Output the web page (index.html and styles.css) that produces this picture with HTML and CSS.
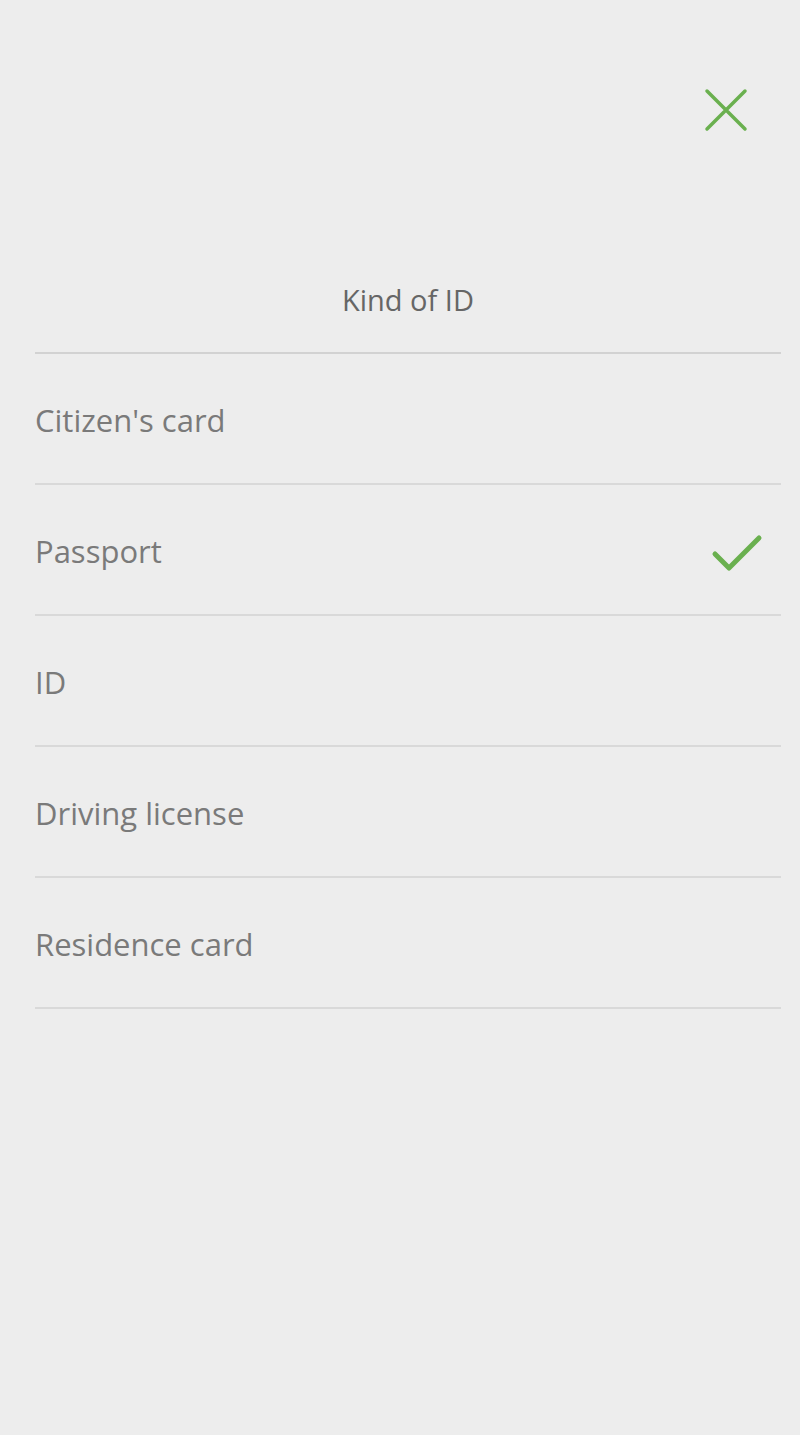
FILE: index.html
```html
<!DOCTYPE html>
<html>
<head>
<meta charset="utf-8">
<link rel="stylesheet" href="styles.css">
</head>
<body>
<div class="screen">
  <div class="topbar">
    <button class="close" aria-label="Close">
      <svg width="44" height="44" viewBox="0 0 44 44"><path d="M3 3 L41 41 M41 3 L3 41" stroke="#6ab04f" stroke-width="3.5" stroke-linecap="round" fill="none"/></svg>
    </button>
  </div>
  <h1 class="title">Kind of ID</h1>
  <ul class="list">
    <li class="item">Citizen's card</li>
    <li class="item selected">Passport
      <svg class="check" width="52" height="40" viewBox="0 0 52 40"><path d="M4 21 L18 35 L48 5" stroke="#6ab04f" stroke-width="5" stroke-linecap="round" stroke-linejoin="round" fill="none"/></svg>
    </li>
    <li class="item">ID</li>
    <li class="item">Driving license</li>
    <li class="item">Residence card</li>
  </ul>
</div>
</body>
</html>
```
FILE: styles.css
```css
html, body {
  margin: 0;
  padding: 0;
  background: #ededed;
}
body {
  font-family: "Open Sans", "Noto Sans", sans-serif;
  width: 800px;
  height: 1435px;
}
.screen {
  padding: 0 19px 0 35px;
}
.topbar {
  display: flex;
  justify-content: flex-end;
  padding-top: 88px;
  padding-right: 33px;
}
.close {
  background: none;
  border: 0;
  padding: 0;
  width: 44px;
  height: 44px;
  display: block;
}
.close svg { display: block; }
.title {
  margin: 148px 0 0 0;
  text-align: center;
  font-weight: 400;
  font-size: 29px;
  line-height: 40px;
  color: #666666;
  border-bottom: 2px solid #d2d2d2;
  box-sizing: border-box;
  height: 74px;
}
.list {
  list-style: none;
  margin: 0;
  padding: 0;
}
.item {
  height: 131px;
  box-sizing: border-box;
  border-bottom: 2px solid #d9d9d9;
  display: flex;
  align-items: center;
  justify-content: space-between;
  font-size: 31px;
  color: #7a7a7a;
  padding-top: 2px;
}
.check {
  display: block;
  margin-right: 18px;
  margin-top: 4px;
}
```
